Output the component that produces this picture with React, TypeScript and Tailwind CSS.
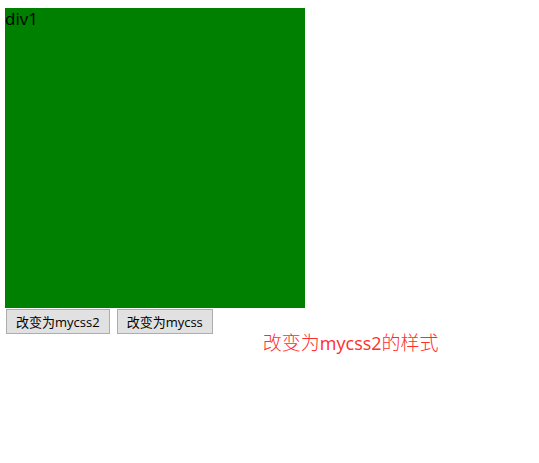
import React, { useState } from 'react';

const boxStyles = {
  mycss: 'bg-red-600',
  mycss2: 'bg-[#008000]',
};

type StyleName = keyof typeof boxStyles;

interface StyleButtonProps {
  name: StyleName;
  onSelect: (name: StyleName) => void;
}

const StyleButton: React.FC<StyleButtonProps> = ({ name, onSelect }) => (
  <button
    type="button"
    onClick={() => onSelect(name)}
    className="px-[9px] pt-0.5 pb-px border border-[#adadad] bg-[#e1e1e1] text-[13px] leading-5 whitespace-nowrap hover:border-[#0078d7] hover:bg-[#e5f1fb]"
  >
    改变为{name}
  </button>
);

const App: React.FC = () => {
  const [current, setCurrent] = useState<StyleName>('mycss2');

  return (
    <main className="min-h-screen bg-white px-[5px] py-2 text-black font-['Open_Sans','Noto_Sans_CJK_SC',sans-serif]">
      {/* Box whose style is switched */}
      <div className={`size-[300px] text-[17px] leading-[22px] ${boxStyles[current]}`}>div1</div>

      <div className="flex items-start px-px pt-px">
        <div className="flex gap-[7px]">
          <StyleButton name="mycss2" onSelect={setCurrent} />
          <StyleButton name="mycss" onSelect={setCurrent} />
        </div>
        <p className="ml-[50px] mt-5 text-[19px] leading-7 font-light text-[#ff2d2d] whitespace-nowrap">
          改变为<span className="text-lg leading-7 font-medium">{current}</span>的样式
        </p>
      </div>
    </main>
  );
};

export default App;
